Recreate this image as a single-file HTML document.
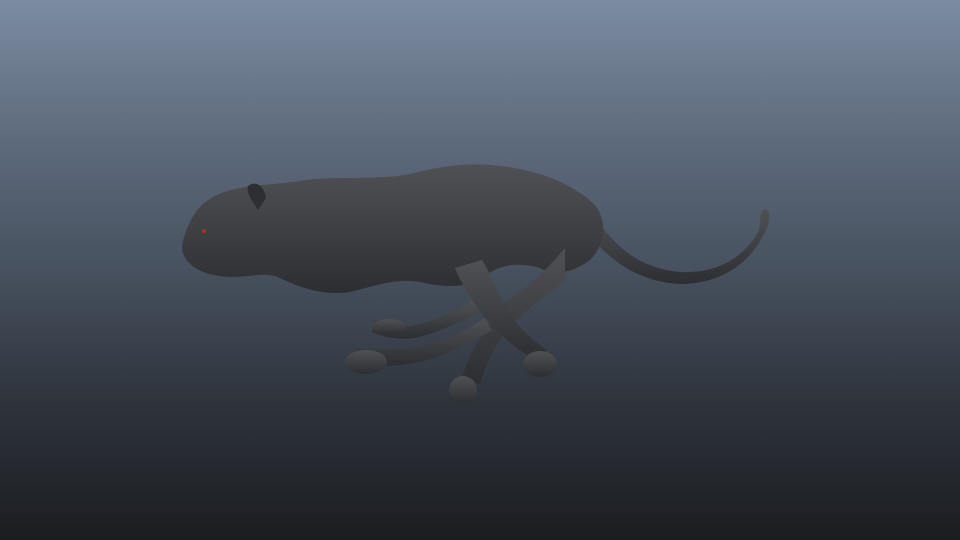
<!DOCTYPE html>
<html><head><meta charset="utf-8"><style>
html,body{margin:0;padding:0;width:960px;height:540px;overflow:hidden}
body{background:linear-gradient(to bottom,#7b8ba1 0%,#5f6c7e 25%,#47515f 50%,#2e333b 75%,#1b1d21 100%)}
svg{position:absolute;left:0;top:0}
</style></head><body>
<svg width="960" height="540" viewBox="0 0 960 540">
<defs>
<linearGradient id="b" x1="0" y1="0" x2="0" y2="1">
<stop offset="0" stop-color="#505154"/><stop offset="0.5" stop-color="#3f4043"/><stop offset="1" stop-color="#2d2e31"/>
</linearGradient>
</defs>
<g fill="url(#b)">
<!-- tail -->
<path d="M598 222 C620 250 640 268 680 272 C720 274 745 255 758 232 C762 222 758 214 764 209 C772 210 770 222 766 230 C752 262 722 284 680 284 C640 282 612 262 592 238 Z"/>
<!-- body -->
<path d="M190 222 C198 204 215 192 240 188 C262 184 285 184 305 180 C340 176 380 180 410 174 C440 166 470 162 500 166 C540 170 575 185 595 205 C608 222 605 245 590 260 C575 272 555 276 540 268 C520 262 500 264 485 276 C470 288 445 288 420 282 C395 278 375 286 350 292 C325 296 300 288 280 278 C262 270 245 280 220 276 C200 274 185 264 182 250 C182 240 186 230 190 222 Z"/>
<path d="M248 186 C256 180 264 186 266 198 L258 210 C252 200 246 194 248 186 Z" fill="#2e2f32"/>
<!-- legs -->
<path d="M565 248 C545 272 525 290 505 302 C492 318 482 334 472 352 C466 366 462 376 460 382 L480 384 C484 370 490 354 500 340 C514 320 535 302 565 282 Z"/>
<path d="M455 268 C468 300 488 322 505 338 C515 348 525 354 535 360 L547 350 C532 340 517 326 507 310 C497 292 492 276 482 260 Z"/>
<path d="M472 300 C452 314 432 322 410 326 C395 328 385 322 375 320 L372 332 C385 338 400 340 415 338 C440 332 460 322 480 312 Z"/>
<path d="M484 318 C462 334 440 344 410 348 C390 350 372 350 357 348 L352 362 C375 368 400 366 420 362 C450 354 472 342 492 330 Z"/>
<ellipse cx="366" cy="362" rx="21" ry="12"/>
<ellipse cx="389" cy="327" rx="17" ry="8"/>
<ellipse cx="463" cy="390" rx="14" ry="14"/>
<ellipse cx="540" cy="364" rx="17" ry="13"/>
</g>
<circle cx="204" cy="231" r="2" fill="#b03020"/>
</svg>
</body></html>
